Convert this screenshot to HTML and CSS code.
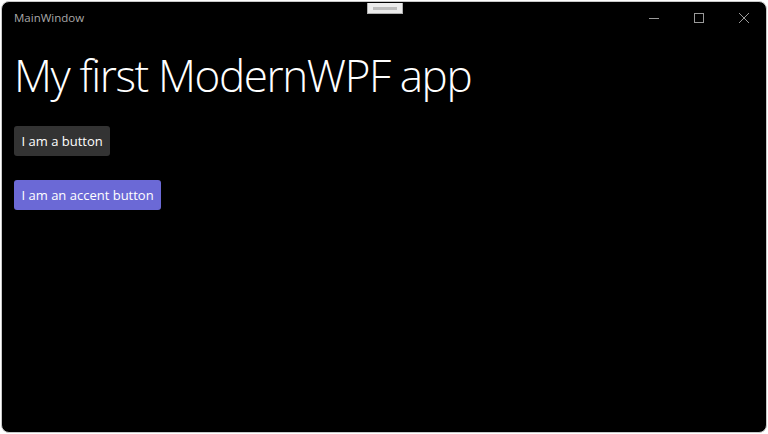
FILE: index.html
```html
<!DOCTYPE html>
<html lang="en">
<head>
  <meta charset="UTF-8">
  <link rel="stylesheet" href="styles.css">
  <title>MainWindow</title>
</head>
<body>
  <div class="window">
    <div class="titlebar">
      <div class="title">MainWindow</div>
      <div class="caption-buttons">
        <span class="cap-btn">
          <svg width="10" height="10" viewBox="0 0 10 10"><path d="M0 5.5H10" stroke="#9a9a9a" stroke-width="1"/></svg>
        </span>
        <span class="cap-btn">
          <svg width="10" height="10" viewBox="0 0 10 10"><rect x="0.5" y="0.5" width="9" height="9" fill="none" stroke="#9a9a9a" stroke-width="1"/></svg>
        </span>
        <span class="cap-btn">
          <svg width="10" height="10" viewBox="0 0 10 10"><path d="M0 0L10 10M10 0L0 10" stroke="#9a9a9a" stroke-width="1"/></svg>
        </span>
      </div>
    </div>
    <div class="debug-bar"><span></span></div>

    <main class="content">
      <h1>My first ModernWPF app</h1>
      <button class="btn">I am a button</button>
      <button class="btn accent">I am an accent button</button>
    </main>
  </div>
</body>
</html>
```

FILE: styles.css
```css
* {
  margin: 0;
  padding: 0;
  box-sizing: border-box;
}

body {
  background-color: #ffffff;
  width: 768px;
  height: 434px;
  padding: 1px;
  font-family: "Open Sans", "Noto Sans", sans-serif;
}

.window {
  position: relative;
  height: 100%;
  background-color: #000;
  border: 1px solid #c8c8c8;
  border-radius: 8px;
  display: flex;
  flex-direction: column;
}

.titlebar {
  height: 31px;
  display: flex;
  justify-content: space-between;
  align-items: center;
}

.title {
  padding-left: 12px;
  font-size: 11.5px;
  color: #a8a8a8;
}

.caption-buttons {
  display: flex;
  height: 100%;
}

.cap-btn {
  width: 45px;
  display: flex;
  align-items: center;
  justify-content: center;
}

.debug-bar {
  position: absolute;
  top: 1px;
  left: 365px;
  width: 36px;
  height: 11px;
  background-color: #ececec;
  border: 1px solid #b0b0b0;
  border-top: none;
  display: flex;
  align-items: center;
  justify-content: center;
}

.debug-bar span {
  width: 24px;
  height: 3px;
  background-color: #bdbdbd;
}

.content {
  padding: 14px 12px;
  display: flex;
  flex-direction: column;
  align-items: flex-start;
}

h1 {
  font-size: 44px;
  font-weight: 300;
  letter-spacing: -1.4px;
  font-variant-ligatures: none;
  color: #fff;
  line-height: 56px;
  margin-bottom: 23px;
}

.btn {
  font-family: inherit;
  font-size: 13px;
  color: #fff;
  background-color: #333;
  border: none;
  border-radius: 3px;
  height: 30px;
  padding: 0 7.5px;
  margin-bottom: 24px;
}

.btn.accent {
  background-color: #6b69d6;
}
```
